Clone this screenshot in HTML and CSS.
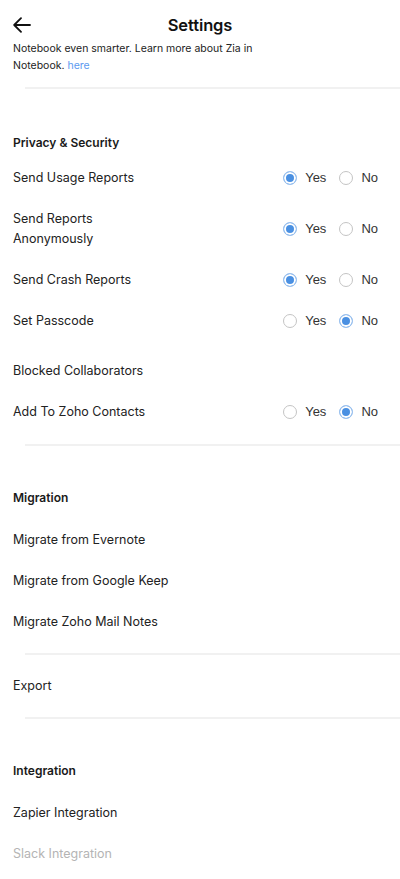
FILE: index.html
```html
<!DOCTYPE html>
<html lang="en">
<head>
<meta charset="utf-8">
<title>Settings</title>
<link rel="stylesheet" href="styles.css">
</head>
<body>
<div class="page">
  <header class="topbar">
    <svg class="back" width="18" height="16" viewBox="0 0 18 16" fill="none" stroke="#111" stroke-width="1.8" stroke-linecap="round" stroke-linejoin="round"><path d="M17 8H1.5M8 1.2L1.2 8 8 14.8"/></svg>
    <h1 class="title">Settings</h1>
  </header>
  <p class="intro"><span class="intro-line">Notebook even smarter. Learn more about Zia in</span><span class="intro-line">Notebook. <a class="link">here</a></span></p>
  <div class="divider first"></div>

  <section class="section privacy">
    <h2 class="section-title tight">Privacy &amp; Security</h2>
    <div class="row">
      <span class="label">Send Usage Reports</span>
      <div class="choices"><span class="radio on"></span><span class="opt">Yes</span><span class="radio"></span><span class="opt">No</span></div>
    </div>
    <div class="row tall">
      <span class="label">Send Reports<br>Anonymously</span>
      <div class="choices"><span class="radio on"></span><span class="opt">Yes</span><span class="radio"></span><span class="opt">No</span></div>
    </div>
    <div class="row">
      <span class="label">Send Crash Reports</span>
      <div class="choices"><span class="radio on"></span><span class="opt">Yes</span><span class="radio"></span><span class="opt">No</span></div>
    </div>
    <div class="row">
      <span class="label">Set Passcode</span>
      <div class="choices"><span class="radio"></span><span class="opt">Yes</span><span class="radio on"></span><span class="opt">No</span></div>
    </div>
    <div class="row spaced">
      <span class="label">Blocked Collaborators</span>
    </div>
    <div class="row">
      <span class="label">Add To Zoho Contacts</span>
      <div class="choices"><span class="radio"></span><span class="opt">Yes</span><span class="radio on"></span><span class="opt">No</span></div>
    </div>
  </section>
  <div class="divider"></div>

  <section class="section">
    <h2 class="section-title">Migration</h2>
    <div class="row"><span class="label">Migrate from Evernote</span></div>
    <div class="row"><span class="label">Migrate from Google Keep</span></div>
    <div class="row"><span class="label">Migrate Zoho Mail Notes</span></div>
  </section>
  <div class="divider"></div>
  <div class="row"><span class="label">Export</span></div>
  <div class="divider"></div>

  <section class="section">
    <h2 class="section-title">Integration</h2>
    <div class="row"><span class="label">Zapier Integration</span></div>
    <div class="row"><span class="label muted">Slack Integration</span></div>
  </section>
</div>
</body>
</html>
```

FILE: styles.css
```css
html, body {
  margin: 0;
  padding: 0;
  background: #fff;
}
body {
  font-family: Inter, "Noto Sans", sans-serif;
  color: #222;
  width: 400px;
  height: 879px;
  overflow: hidden;
}
.page {
  display: flex;
  flex-direction: column;
}
.topbar {
  position: relative;
  display: flex;
  align-items: center;
  justify-content: center;
  height: 30px;
  padding-top: 10px;
}
.back {
  position: absolute;
  left: 13px;
  top: 17px;
}
.title {
  margin: 0;
  font-size: 16.5px;
  font-weight: 600;
  color: #111;
  letter-spacing: -0.1px;
}
.intro {
  display: flex;
  flex-direction: column;
  margin: 0 13px;
  font-size: 10.5px;
  line-height: 17px;
  color: #222;
}
.intro-line {
  display: block;
}
.link {
  color: #5c9af0;
}
.divider {
  height: 2px;
  background: #f1f1f1;
  margin: 11px 0 10px 25px;
}
.divider.first {
  margin-top: 13px;
  margin-bottom: 0;
}
.section {
  display: flex;
  flex-direction: column;
}
.section.privacy {
  padding-bottom: 1px;
}
.section-title {
  margin: 32px 0 11px;
  padding: 0 13px;
  font-size: 12px;
  line-height: 20px;
  font-weight: 600;
  color: #1a1a1a;
}
.section-title.tight {
  margin-top: 44px;
  margin-bottom: 4px;
}
.row {
  display: flex;
  align-items: center;
  justify-content: space-between;
  height: 41px;
  padding: 0 13px;
}
.row.tall {
  height: 61px;
}
.row.spaced {
  margin-top: 9px;
}
.label {
  font-size: 12.5px;
  line-height: 20px;
  color: #222;
}
.label.muted {
  color: #b4b4b4;
}
.choices {
  display: flex;
  align-items: center;
  margin-right: 9px;
  font-family: "Liberation Sans", Arial, sans-serif;
  font-size: 13px;
  color: #333;
}
.radio {
  box-sizing: border-box;
  width: 14px;
  height: 14px;
  border-radius: 50%;
  border: 1px solid #c4c4c4;
  background: #fff;
  margin-right: 8px;
}
.radio.on {
  border: 1px solid #9cc2ef;
  background: #4a90e2;
  box-shadow: inset 0 0 0 2px #fff;
}
.opt {
  margin-right: 13px;
}
.opt:last-child {
  margin-right: 0;
}
```
